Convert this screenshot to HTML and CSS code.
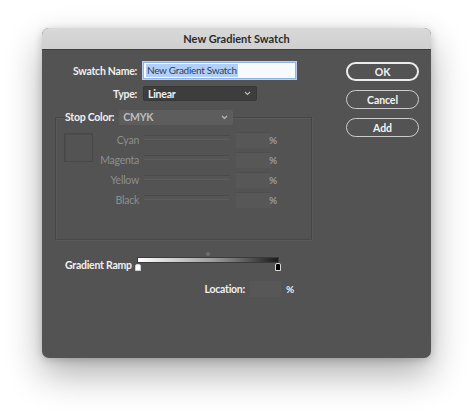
FILE: index.html
```html
<!DOCTYPE html>
<html>
<head>
<meta charset="utf-8">
<link rel="stylesheet" href="styles.css">
</head>
<body>
<div class="dialog">
  <div class="titlebar">New Gradient Swatch</div>
  <div class="body">
    <div class="main">
      <div class="field-row">
        <span class="label">Swatch Name:</span>
        <div class="text-input"><span class="sel">New Gradient Swatch</span></div>
      </div>
      <div class="field-row row-type">
        <span class="label">Type:</span>
        <div class="select dark">
          <span>Linear</span>
          <svg class="chev" width="7" height="5" viewBox="0 0 7 5"><polyline points="1,1 3.5,3.5 6,1" fill="none" stroke="currentColor" stroke-width="1.1"/></svg>
        </div>
      </div>
      <fieldset class="group">
        <legend class="legend">
          <span class="label">Stop Color:</span>
          <div class="select light">
            <span>CMYK</span>
            <svg class="chev" width="7" height="5" viewBox="0 0 7 5"><polyline points="1,1 3.5,3.5 6,1" fill="none" stroke="currentColor" stroke-width="1.1"/></svg>
          </div>
        </legend>
        <div class="stop-content">
          <div class="swatch"></div>
          <div class="channels">
            <span class="ch-label">Cyan</span><div class="track"></div><div class="num"></div><span class="pct">%</span>
            <span class="ch-label">Magenta</span><div class="track"></div><div class="num"></div><span class="pct">%</span>
            <span class="ch-label">Yellow</span><div class="track"></div><div class="num"></div><span class="pct">%</span>
            <span class="ch-label">Black</span><div class="track"></div><div class="num"></div><span class="pct">%</span>
          </div>
        </div>
      </fieldset>
      <div class="ramp-row">
        <span class="label ramp-label">Gradient Ramp</span>
        <div class="ramp">
          <div class="mid-row"><div class="mid"></div></div>
          <div class="bar"></div>
          <div class="stops">
            <div class="stop white"></div>
            <div class="stop black"></div>
          </div>
        </div>
      </div>
      <div class="location-row">
        <span class="label loc-label">Location:</span>
        <div class="loc-input"></div>
        <span class="loc-pct">%</span>
      </div>
    </div>
    <div class="side">
      <button class="btn default">OK</button>
      <button class="btn">Cancel</button>
      <button class="btn">Add</button>
    </div>
  </div>
</div>
</body>
</html>
```

FILE: styles.css
```css
html, body {
  margin: 0;
  padding: 0;
  background: #ffffff;
  width: 474px;
  height: 415px;
  overflow: hidden;
  font-family: Lato, "Liberation Sans", sans-serif;
}

.dialog {
  margin: 28px 0 0 42px;
  width: 389px;
  height: 330px;
  border-radius: 7px;
  background: #535353;
  overflow: hidden;
  box-shadow: 0 16px 36px rgba(0, 0, 0, 0.32), 0 2px 8px rgba(0, 0, 0, 0.18);
  display: flex;
  flex-direction: column;
}

.titlebar {
  height: 21px;
  line-height: 21px;
  background: linear-gradient(#d9d9d9, #cfcfcf);
  border-bottom: 1px solid #3e3e3e;
  text-align: center;
  font-size: 11px;
  font-weight: 700;
  color: #2b2b2b;
}

.body {
  flex: 1;
  display: flex;
  letter-spacing: -0.25px;
}

.main {
  flex: 1;
  padding-top: 12px;
}

.label {
  font-size: 10.5px;
  font-weight: 700;
  color: #f0f0f0;
  white-space: nowrap;
}

.field-row {
  display: flex;
  align-items: center;
  gap: 6px;
  height: 17px;
}

.field-row .label {
  width: 95px;
  text-align: right;
}

.row-type {
  margin-top: 7px;
  height: 15px;
}

.text-input {
  box-sizing: border-box;
  width: 153px;
  height: 17px;
  background: #f7faff;
  border: 1px solid #8fb3e6;
  box-shadow: 0 0 0 1px #b9d0f0;
  padding: 1px 2px;
  display: flex;
  align-items: center;
}

.sel {
  background: #b2cff5;
  color: #2d3f66;
  font-size: 10px;
  font-weight: 400;
  letter-spacing: -0.3px;
  line-height: 13px;
  padding: 0 1px;
}

.select {
  box-sizing: border-box;
  width: 114px;
  height: 15px;
  border-radius: 2px;
  display: flex;
  align-items: center;
  justify-content: space-between;
  padding: 0 5px 0 4px;
  font-size: 10.5px;
  font-weight: 700;
}

.select.dark {
  background: #3d3d3d;
  border: 1px solid #373737;
  color: #f2f2f2;
}

.select.light {
  background: #5d5d5d;
  color: #bdbdbd;
}

.chev {
  color: #bcbcbc;
}

.group {
  box-sizing: border-box;
  margin: 8px 0 0 13px;
  width: 257px;
  height: 131px;
  padding: 7px 0 0 9px;
  border: 1px solid #474747;
  box-shadow: inset 1px 1px 0 #5a5a5a, 1px 1px 0 #5a5a5a;
  min-inline-size: 0;
}

.legend {
  padding: 0;
  display: flex;
  align-items: center;
  gap: 5px;
  height: 16px;
}

.stop-content {
  display: flex;
  align-items: flex-start;
}

.swatch {
  box-sizing: border-box;
  width: 29px;
  height: 29px;
  margin-top: 1px;
  margin-left: -1px;
  border: 1px solid #474747;
  box-shadow: inset 1px 1px 0 #4c4c4c;
}

.channels {
  display: grid;
  grid-template-columns: 46px 90px 35px auto;
  grid-auto-rows: 16px;
  row-gap: 4px;
  align-items: center;
}

.ch-label {
  font-size: 10.5px;
  color: #8e8e8e;
  text-align: right;
}

.track {
  margin-left: 5px;
  height: 3px;
  margin-top: -5px;
  border-top: 1px solid #4a4a4a;
  border-bottom: 1px solid #5d5d5d;
  background: #555555;
}

.num {
  box-sizing: border-box;
  margin-left: 7px;
  width: 35px;
  height: 16px;
  background: #575757;
  border-top: 1px solid #4e4e4e;
}

.pct {
  margin-left: 5px;
  font-size: 10px;
  font-weight: 700;
  color: #9b9b9b;
}

.ramp-row {
  display: flex;
  align-items: flex-start;
  margin-top: 12px;
  padding-left: 23px;
}

.ramp-label {
  margin-top: 7px;
  width: 72px;
}

.ramp {
  width: 142px;
}

.mid-row {
  height: 5px;
  display: flex;
  justify-content: center;
}

.mid {
  width: 4px;
  height: 4px;
  border-radius: 50%;
  background: #6e6e6e;
}

.bar {
  box-sizing: border-box;
  height: 6px;
  border: 1px solid #3a3a3a;
  background: linear-gradient(to right, #ffffff, #9a9a9a 55%, #1a1a1a);
}

.stops {
  display: flex;
  justify-content: space-between;
  margin: 1px -2px 0 -2px;
}

.stop {
  box-sizing: border-box;
  width: 6px;
  height: 7px;
  border-radius: 2px 2px 0 0;
}

.stop.white {
  background: #ffffff;
  border: 1px solid #cfcfcf;
}

.stop.black {
  background: #000000;
  border: 1px solid #d8d8d8;
  height: 8px;
  margin-top: -1px;
}

.location-row {
  display: flex;
  align-items: center;
  margin-top: 10px;
}

.loc-label {
  width: 203px;
  text-align: right;
}

.loc-input {
  margin-left: 5px;
  width: 31px;
  height: 16px;
  background: #575757;
}

.loc-pct {
  margin-left: 5px;
  font-size: 10px;
  font-weight: 700;
  color: #eeeeee;
}

.side {
  width: 73px;
  padding: 12px 12px 0 0;
  display: flex;
  flex-direction: column;
  gap: 9px;
}

.btn {
  box-sizing: border-box;
  width: 73px;
  height: 19px;
  border-radius: 10px;
  border: 1px solid #cdcdcd;
  background: transparent;
  color: #f2f2f2;
  font-family: Lato, "Liberation Sans", sans-serif;
  font-size: 10.5px;
  font-weight: 700;
  letter-spacing: -0.1px;
  padding: 0;
}

.btn.default {
  border: 2px solid #ececec;
}
```
